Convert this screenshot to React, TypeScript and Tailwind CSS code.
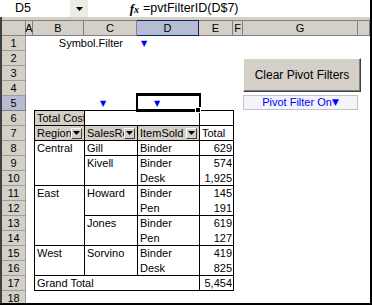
import React from "react";

type Rep = { name: string; items: [string, string][] };
type Region = { name: string; reps: Rep[] };

const regions: Region[] = [
  {
    name: "Central",
    reps: [
      { name: "Gill", items: [["Binder", "629"]] },
      { name: "Kivell", items: [["Binder", "574"], ["Desk", "1,925"]] },
    ],
  },
  {
    name: "East",
    reps: [
      { name: "Howard", items: [["Binder", "145"], ["Pen", "191"]] },
      { name: "Jones", items: [["Binder", "619"], ["Pen", "127"]] },
    ],
  },
  {
    name: "West",
    reps: [{ name: "Sorvino", items: [["Binder", "419"], ["Desk", "825"]] }],
  },
];

const colHeads = ["A", "B", "C", "D", "E", "F", "G", ""];
const rowNums = Array.from({ length: 18 }, (_, i) => i + 1);

function DropButton() {
  return (
    <span className="mr-[2px] flex h-[11px] w-[11px] shrink-0 items-center justify-center border border-t-white border-l-white border-r-[#404040] border-b-[#404040] bg-[#d4d0c8]">
      <svg width="7" height="4" viewBox="0 0 7 4" aria-hidden="true">
        <polygon points="0,0 7,0 3.5,4" fill="#000" />
      </svg>
    </span>
  );
}

function FieldButton({ label, className }: { label: string; className: string }) {
  return (
    <div className={`flex items-center border-r border-b border-black bg-[#d4d0c8] pl-[2px] ${className}`}>
      <span className="min-w-0 flex-1 overflow-hidden whitespace-nowrap">{label}</span>
      <DropButton />
    </div>
  );
}

function PivotTable() {
  return (
    <div className="col-start-3 col-end-7 row-start-7 row-end-19 -mt-[1px] ml-[1px] w-[200px] self-start border-t border-black leading-[14px]">
      {/* row 6: data field */}
      <div className="flex h-[15px]">
        <div className="w-[51px] overflow-hidden whitespace-nowrap border-x border-b border-black bg-[#d4d0c8] pl-[2px]">
          Total Cost
        </div>
        <div className="w-[53px] border-b border-black" />
        <div className="w-[62px] border-r border-b border-black" />
        <div className="w-[34px] border-r border-b border-black" />
      </div>

      {/* row 7: row fields */}
      <div className="flex h-[15px]">
        <FieldButton label="Region" className="w-[51px] border-l" />
        <FieldButton label="SalesRep" className="w-[53px]" />
        <FieldButton label="ItemSold" className="w-[62px]" />
        <div className="w-[34px] border-r border-b border-black pl-[2px]">Total</div>
      </div>

      {/* data */}
      {regions.map((region) => (
        <div key={region.name} className="flex">
          <div className="w-[51px] border-x border-b border-black pl-[2px]">{region.name}</div>
          <div className="flex flex-col">
            {region.reps.map((rep) => (
              <div key={rep.name} className="flex">
                <div className="w-[53px] border-r border-b border-black pl-[2px]">{rep.name}</div>
                <div className="flex flex-col">
                  {rep.items.map(([item, total], i) => {
                    const last = i === rep.items.length - 1;
                    return (
                      <div key={item} className="flex h-[15px]">
                        <div
                          className={
                            last
                              ? "w-[62px] border-r border-b border-black pl-[2px]"
                              : "w-[62px] border-r border-black pl-[2px]"
                          }
                        >
                          {item}
                        </div>
                        <div
                          className={
                            last
                              ? "w-[34px] border-r border-b border-black pr-[1px] text-right"
                              : "w-[34px] border-r border-black pr-[1px] text-right"
                          }
                        >
                          {total}
                        </div>
                      </div>
                    );
                  })}
                </div>
              </div>
            ))}
          </div>
        </div>
      ))}

      {/* grand total */}
      <div className="flex h-[15px]">
        <div className="w-[166px] border-x border-b border-black pl-[2px]">Grand Total</div>
        <div className="w-[34px] border-r border-b border-black pr-[1px] text-right">5,454</div>
      </div>
    </div>
  );
}

export default function App() {
  return (
    <div className="h-[305px] w-[372px] overflow-hidden border-r-2 border-b-2 border-black bg-white font-['Liberation_Sans',Arial,sans-serif] text-[11px] text-black">
      {/* Formula bar */}
      <div className="flex h-[17px] text-[12.5px] leading-[17px]">
        <div className="w-[70px] pl-[15px]">D5</div>
        <div className="flex w-[18px] items-center justify-center bg-[#ecebe6]">
          <svg width="7" height="4" viewBox="0 0 7 4" aria-hidden="true">
            <polygon points="0,0 7,0 3.5,4" fill="#000" />
          </svg>
        </div>
        <div className="flex w-[54px] items-center justify-end pr-[3px]">
          <span className="font-['Liberation_Serif',serif] text-[13px] font-bold italic">
            f<span className="text-[10px]">x</span>
          </span>
        </div>
        <div className="flex-1 pl-[1px]">=pvtFilterID(D$7)</div>
      </div>

      {/* Sheet */}
      <div className="h-[286px] overflow-hidden border-l-2 border-[#404040]">
        <div className="h-[3px] bg-[#d4d0c8]" />
        <div className="relative grid grid-cols-[24px_7px_51px_53px_62px_34px_10px_115px_12px] grid-rows-[16px_repeat(18,15px)]">
          {/* column headers */}
          <div className="border-t border-r border-b border-[#808080] bg-[#d4d0c8]" />
          {colHeads.map((c, i) => (
            <div
              key={i}
              className={
                c === "D"
                  ? "flex items-center justify-center border-t border-r border-b border-[#0a246a] bg-[#b6bdd2]"
                  : "flex items-center justify-center border-t border-r border-b border-[#808080] bg-[#d4d0c8]"
              }
            >
              {c}
            </div>
          ))}

          {/* row headers */}
          <div className="col-start-1 row-start-2 row-end-20 flex flex-col">
            {rowNums.map((n) => (
              <div
                key={n}
                className={
                  n === 5
                    ? "h-[15px] shrink-0 border-r border-b border-[#808080] bg-[#b6bdd2] text-center leading-[14px]"
                    : "h-[15px] shrink-0 border-r border-b border-[#a09d96] bg-[#d4d0c8] text-center leading-[14px]"
                }
              >
                {n}
              </div>
            ))}
          </div>

          {/* row 1 */}
          <div className="col-start-3 col-end-5 row-start-2 pr-[14px] text-right leading-[15px]">Symbol.Filter</div>
          <div className="col-start-5 row-start-2 pl-[4px] font-['DejaVu_Sans',sans-serif] text-[8px] leading-[15px] text-[#0000ff]">
            ▼
          </div>

          {/* row 5 */}
          <div className="col-start-4 row-start-6 pl-[16px] font-['DejaVu_Sans',sans-serif] text-[8px] leading-[15px] text-[#0000ff]">
            ▼
          </div>
          <div className="relative col-start-5 row-start-6 pl-[17px] font-['DejaVu_Sans',sans-serif] text-[8px] leading-[15px] text-[#0000ff]">
            ▼
            <div className="absolute -top-[3px] -right-[2px] -bottom-[1px] -left-[1px] z-10 border-x-2 border-y-[3px] border-black" />
            <div className="absolute -right-[2px] -bottom-[2px] z-20 h-[6px] w-[6px] border border-white bg-black" />
          </div>

          <PivotTable />

          {/* floating shapes */}
          <div className="absolute top-[38px] left-[241px] flex h-[34px] w-[118px] items-center justify-center border border-t-white border-l-white border-r-[#404040] border-b-[#404040] bg-[#d4d0c8] text-[12px] shadow-[inset_-1px_-1px_0_#808080]">
            Clear Pivot Filters
          </div>
          <div className="absolute top-[75px] left-[241px] flex h-[15px] w-[115px] items-center justify-center border border-[#c4c4c4] bg-[#f4f4fb] text-[11px] text-[#0000ff]">
            Pivot Filter On<span className="font-['DejaVu_Sans',sans-serif] text-[9px]">▼</span>
          </div>
        </div>
      </div>
    </div>
  );
}
